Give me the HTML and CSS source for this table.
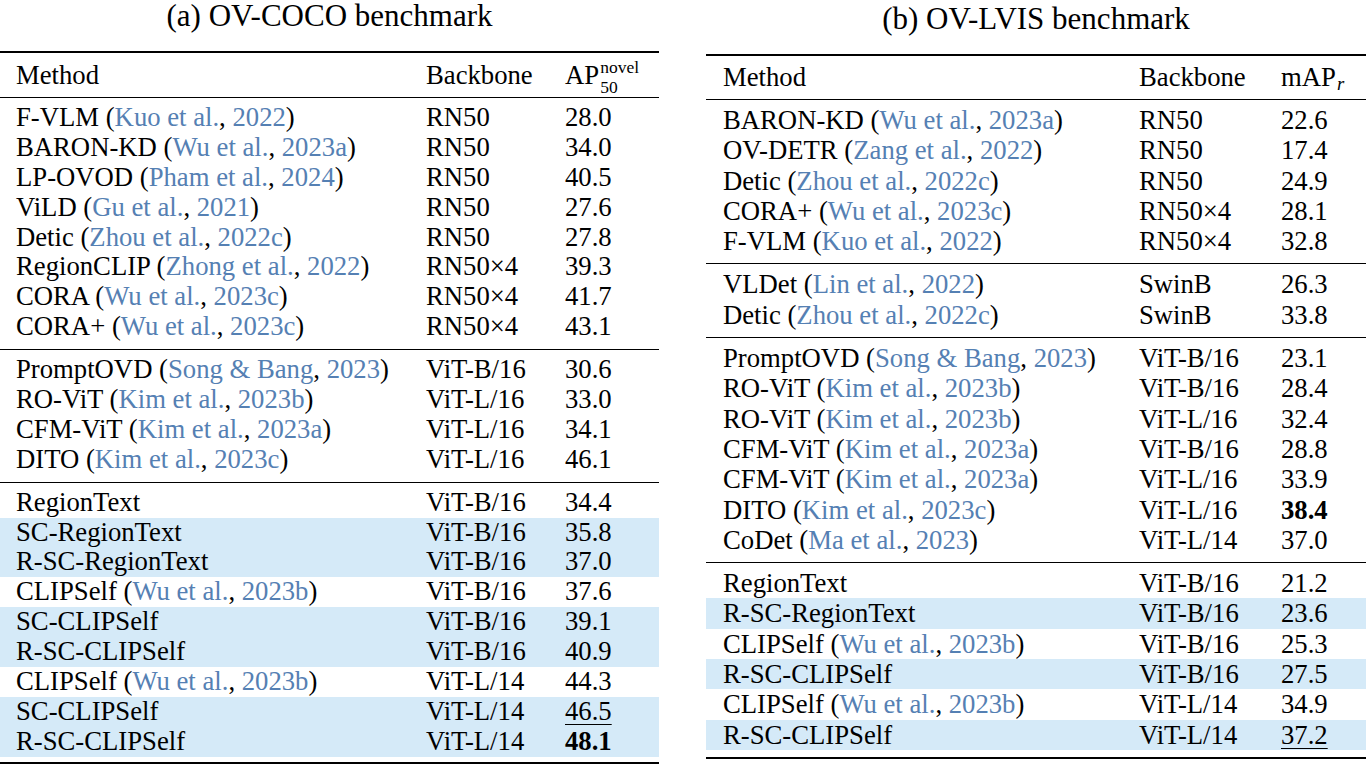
FILE: index.html
```html
<!DOCTYPE html>
<html lang="en">
<head>
<meta charset="utf-8">
<title>OV-COCO and OV-LVIS benchmarks</title>
<link rel="stylesheet" href="styles.css">
</head>
<body>
<main class="page">
  <section class="panel coco">
    <h2 class="caption">(a) OV-COCO benchmark</h2>
    <div class="tbl">
      <div class="row head"><span>Method</span><span>Backbone</span><span class="ap">AP<span class="scripts"><span class="sup">novel</span><span class="sub">50</span></span></span></div>
      <div class="group">
        <div class="row"><span>F-VLM <span class="c">(<span class="ref">Kuo et al.</span>, <span class="ref">2022</span>)</span></span><span>RN50</span><span>28.0</span></div>
        <div class="row"><span>BARON-KD <span class="c">(<span class="ref">Wu et al.</span>, <span class="ref">2023a</span>)</span></span><span>RN50</span><span>34.0</span></div>
        <div class="row"><span>LP-OVOD <span class="c">(<span class="ref">Pham et al.</span>, <span class="ref">2024</span>)</span></span><span>RN50</span><span>40.5</span></div>
        <div class="row"><span>ViLD <span class="c">(<span class="ref">Gu et al.</span>, <span class="ref">2021</span>)</span></span><span>RN50</span><span>27.6</span></div>
        <div class="row"><span>Detic <span class="c">(<span class="ref">Zhou et al.</span>, <span class="ref">2022c</span>)</span></span><span>RN50</span><span>27.8</span></div>
        <div class="row"><span>RegionCLIP <span class="c">(<span class="ref">Zhong et al.</span>, <span class="ref">2022</span>)</span></span><span>RN50×4</span><span>39.3</span></div>
        <div class="row"><span>CORA <span class="c">(<span class="ref">Wu et al.</span>, <span class="ref">2023c</span>)</span></span><span>RN50×4</span><span>41.7</span></div>
        <div class="row"><span>CORA+ <span class="c">(<span class="ref">Wu et al.</span>, <span class="ref">2023c</span>)</span></span><span>RN50×4</span><span>43.1</span></div>
      </div>
      <div class="group">
        <div class="row"><span>PromptOVD <span class="c">(<span class="ref">Song &amp; Bang</span>, <span class="ref">2023</span>)</span></span><span>ViT-B/16</span><span>30.6</span></div>
        <div class="row"><span>RO-ViT <span class="c">(<span class="ref">Kim et al.</span>, <span class="ref">2023b</span>)</span></span><span>ViT-L/16</span><span>33.0</span></div>
        <div class="row"><span>CFM-ViT <span class="c">(<span class="ref">Kim et al.</span>, <span class="ref">2023a</span>)</span></span><span>ViT-L/16</span><span>34.1</span></div>
        <div class="row"><span>DITO <span class="c">(<span class="ref">Kim et al.</span>, <span class="ref">2023c</span>)</span></span><span>ViT-L/16</span><span>46.1</span></div>
      </div>
      <div class="group last">
        <div class="row"><span>RegionText</span><span>ViT-B/16</span><span>34.4</span></div>
        <div class="row hl"><span>SC-RegionText</span><span>ViT-B/16</span><span>35.8</span></div>
        <div class="row hl"><span>R-SC-RegionText</span><span>ViT-B/16</span><span>37.0</span></div>
        <div class="row"><span>CLIPSelf <span class="c">(<span class="ref">Wu et al.</span>, <span class="ref">2023b</span>)</span></span><span>ViT-B/16</span><span>37.6</span></div>
        <div class="row hl"><span>SC-CLIPSelf</span><span>ViT-B/16</span><span>39.1</span></div>
        <div class="row hl"><span>R-SC-CLIPSelf</span><span>ViT-B/16</span><span>40.9</span></div>
        <div class="row"><span>CLIPSelf <span class="c">(<span class="ref">Wu et al.</span>, <span class="ref">2023b</span>)</span></span><span>ViT-L/14</span><span>44.3</span></div>
        <div class="row hl"><span>SC-CLIPSelf</span><span>ViT-L/14</span><span><span class="second">46.5</span></span></div>
        <div class="row hl"><span>R-SC-CLIPSelf</span><span>ViT-L/14</span><span><strong class="best">48.1</strong></span></div>
      </div>
    </div>
  </section>

  <section class="panel lvis">
    <h2 class="caption">(b) OV-LVIS benchmark</h2>
    <div class="tbl">
      <div class="row head"><span>Method</span><span>Backbone</span><span class="ap">mAP<span class="sub-r">r</span></span></div>
      <div class="group">
        <div class="row"><span>BARON-KD <span class="c">(<span class="ref">Wu et al.</span>, <span class="ref">2023a</span>)</span></span><span>RN50</span><span>22.6</span></div>
        <div class="row"><span>OV-DETR <span class="c">(<span class="ref">Zang et al.</span>, <span class="ref">2022</span>)</span></span><span>RN50</span><span>17.4</span></div>
        <div class="row"><span>Detic <span class="c">(<span class="ref">Zhou et al.</span>, <span class="ref">2022c</span>)</span></span><span>RN50</span><span>24.9</span></div>
        <div class="row"><span>CORA+ <span class="c">(<span class="ref">Wu et al.</span>, <span class="ref">2023c</span>)</span></span><span>RN50×4</span><span>28.1</span></div>
        <div class="row"><span>F-VLM <span class="c">(<span class="ref">Kuo et al.</span>, <span class="ref">2022</span>)</span></span><span>RN50×4</span><span>32.8</span></div>
      </div>
      <div class="group">
        <div class="row"><span>VLDet <span class="c">(<span class="ref">Lin et al.</span>, <span class="ref">2022</span>)</span></span><span>SwinB</span><span>26.3</span></div>
        <div class="row"><span>Detic <span class="c">(<span class="ref">Zhou et al.</span>, <span class="ref">2022c</span>)</span></span><span>SwinB</span><span>33.8</span></div>
      </div>
      <div class="group">
        <div class="row"><span>PromptOVD <span class="c">(<span class="ref">Song &amp; Bang</span>, <span class="ref">2023</span>)</span></span><span>ViT-B/16</span><span>23.1</span></div>
        <div class="row"><span>RO-ViT <span class="c">(<span class="ref">Kim et al.</span>, <span class="ref">2023b</span>)</span></span><span>ViT-B/16</span><span>28.4</span></div>
        <div class="row"><span>RO-ViT <span class="c">(<span class="ref">Kim et al.</span>, <span class="ref">2023b</span>)</span></span><span>ViT-L/16</span><span>32.4</span></div>
        <div class="row"><span>CFM-ViT <span class="c">(<span class="ref">Kim et al.</span>, <span class="ref">2023a</span>)</span></span><span>ViT-B/16</span><span>28.8</span></div>
        <div class="row"><span>CFM-ViT <span class="c">(<span class="ref">Kim et al.</span>, <span class="ref">2023a</span>)</span></span><span>ViT-L/16</span><span>33.9</span></div>
        <div class="row"><span>DITO <span class="c">(<span class="ref">Kim et al.</span>, <span class="ref">2023c</span>)</span></span><span>ViT-L/16</span><span><strong class="best">38.4</strong></span></div>
        <div class="row"><span>CoDet <span class="c">(<span class="ref">Ma et al.</span>, <span class="ref">2023</span>)</span></span><span>ViT-L/14</span><span>37.0</span></div>
      </div>
      <div class="group last">
        <div class="row"><span>RegionText</span><span>ViT-B/16</span><span>21.2</span></div>
        <div class="row hl"><span>R-SC-RegionText</span><span>ViT-B/16</span><span>23.6</span></div>
        <div class="row"><span>CLIPSelf <span class="c">(<span class="ref">Wu et al.</span>, <span class="ref">2023b</span>)</span></span><span>ViT-B/16</span><span>25.3</span></div>
        <div class="row hl"><span>R-SC-CLIPSelf</span><span>ViT-B/16</span><span>27.5</span></div>
        <div class="row"><span>CLIPSelf <span class="c">(<span class="ref">Wu et al.</span>, <span class="ref">2023b</span>)</span></span><span>ViT-L/14</span><span>34.9</span></div>
        <div class="row hl"><span>R-SC-CLIPSelf</span><span>ViT-L/14</span><span><span class="second">37.2</span></span></div>
      </div>
    </div>
  </section>
</main>
</body>
</html>
```
FILE: styles.css
```css
html, body {
  margin: 0;
  padding: 0;
  background: #ffffff;
}

body {
  font-family: "Liberation Serif", "Times New Roman", serif;
  color: #000000;
  width: 1370px;
  height: 768px;
  overflow: hidden;
}

.page {
  display: flex;
  gap: 47px;
  align-items: flex-start;
}

.panel {
  display: flex;
  flex-direction: column;
}

.coco {
  width: 659px;
  --row: 29.9px;
  --pt: 5px;
  --pb: 7px;
  --pl: 5px;
  --cols: 410px 139px 110px;
  --headh: 44px;
}

.lvis {
  width: 660px;
  padding-top: 3px;
  --row: 30.3px;
  --pt: 5px;
  --pb: 7px;
  --pl: 7px;
  --cols: 417px 142px 101px;
  --headh: 43px;
}

.caption {
  margin: 0 0 20px 0;
  font-weight: normal;
  font-size: 31px;
  line-height: 31px;
  height: 31px;
  text-align: center;
}

.tbl {
  border-top: 2px solid #000;
  border-bottom: 2px solid #000;
  font-size: 26.7px;
}

.row {
  display: grid;
  grid-template-columns: var(--cols);
  align-items: center;
  height: var(--row);
  line-height: var(--row);
  white-space: nowrap;
}

.row > span {
  padding-left: 16px;
}

.lvis .row > span:first-child {
  padding-left: 17px;
}

.row.head {
  height: var(--headh);
  line-height: var(--headh);
  border-bottom: 1px solid #000;
}

.row.hl {
  background: #d5eaf8;
}

.group {
  padding-top: var(--pt);
  padding-bottom: var(--pb);
}

.group + .group {
  border-top: 1px solid #000;
}

.group.last {
  padding-bottom: var(--pl);
}

.ref {
  color: #5580b3;
}

.ap {
  display: inline-flex;
  align-items: center;
}

.scripts {
  display: inline-flex;
  flex-direction: column;
  font-size: 17.5px;
  line-height: 20px;
  margin-left: 1px;
  position: relative;
  top: 2px;
}

.sup, .sub {
  display: block;
}

.sub-r {
  font-style: italic;
  font-size: 18.7px;
  line-height: 1;
  position: relative;
  top: 7px;
  margin-left: 1px;
}

.best {
  font-weight: bold;
}

.second {
  text-decoration: underline;
  text-decoration-thickness: 1px;
  text-underline-offset: 4px;
}
```
